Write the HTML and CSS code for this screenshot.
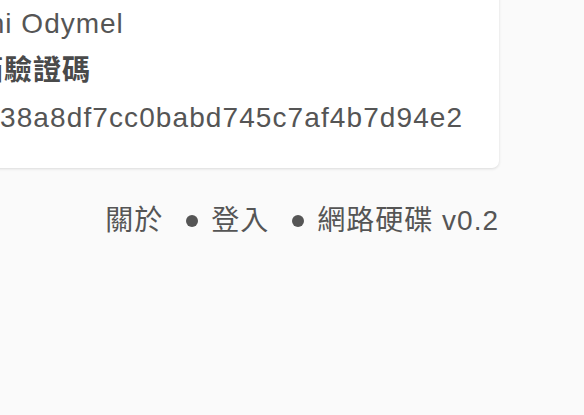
FILE: index.html
```html
<!DOCTYPE html>
<html lang="zh-Hant">
<head>
    <meta charset="UTF-8">
    <meta name="viewport" content="width=device-width, initial-scale=1.0">
    <title>網路硬碟</title>
    <link rel="stylesheet" href="styles.css">
</head>
<body>
    <div class="wrap">
        <div class="card">
            <p class="value">Dani Odymel</p>
            <h3 class="label">信箱驗證碼</h3>
            <p class="value code">9e338a8df7cc0babd745c7af4b7d94e2</p>
        </div>

        <ul class="footer">
            <li><a href="#">關於</a></li>
            <li><a href="#">登入</a></li>
            <li><a href="#">網路硬碟 v0.2</a></li>
        </ul>
    </div>
</body>
</html>
```

FILE: styles.css
```css
body {
    font-family: "Liberation Sans", "Noto Sans CJK TC", sans-serif;
    background-color: #fafafa;
    color: #555;
    font-size: 28px;
    line-height: 40px;
    letter-spacing: 1px;
    margin: 0;
    overflow: hidden;
}
.wrap {
    margin: -18px 85px 0 -80px;
}
.card {
    background-color: #fff;
    border-radius: 7px;
    box-shadow: 0 1px 3px rgba(0, 0, 0, 0.13);
    padding: 22px 20px 30px 31px;
}
.value {
    margin: 0;
}
.code {
    letter-spacing: 1.1px;
    margin-left: -1px;
}
.label {
    font-size: 28px;
    font-weight: bold;
    color: #4a4a4a;
    margin: 7px 0 7px -5px;
}
.footer {
    list-style: none;
    margin: 33px 0 0;
    padding: 0;
    display: flex;
    justify-content: flex-end;
    align-items: center;
}
.footer li {
    display: flex;
    align-items: center;
}
.footer li + li::before {
    content: "";
    width: 12px;
    height: 12px;
    border-radius: 50%;
    background-color: #555;
    margin: 0 13px 0 23px;
}
.footer a {
    color: #555;
    text-decoration: none;
}
```
